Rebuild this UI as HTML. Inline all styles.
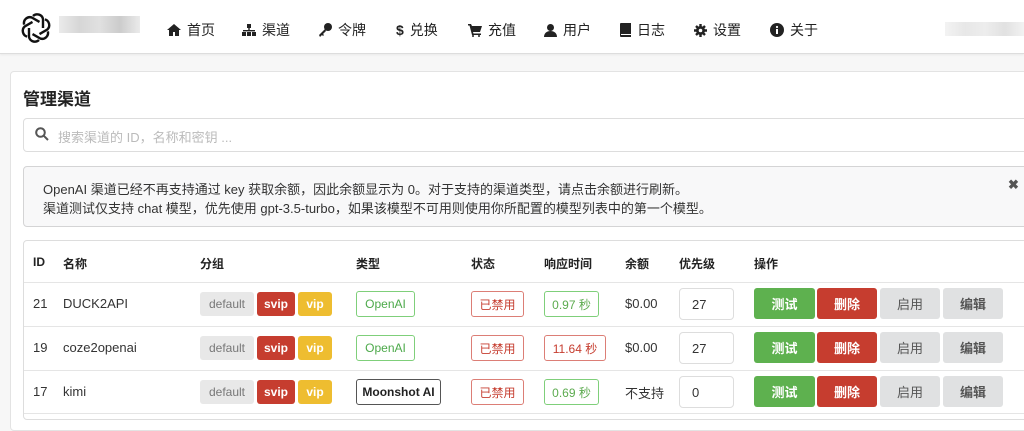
<!DOCTYPE html>
<html><head><meta charset="utf-8"><style>
*{box-sizing:border-box;margin:0;padding:0}
body{width:1024px;height:415px;overflow:hidden;background:#f7f7f7;font-family:"Liberation Sans","Noto Sans CJK SC",sans-serif;color:#333;font-size:13px;position:relative}
.hdr{position:absolute;left:0;top:0;width:1024px;height:54px;background:#fff;border-bottom:1px solid #ddd;box-shadow:0 1px 2px rgba(0,0,0,.06)}
.nav{position:absolute;top:20px;font-size:14px;color:#222;display:flex;align-items:center;gap:6px;white-space:nowrap}
.nav svg{fill:#222}
.blur{position:absolute;background:linear-gradient(90deg,#ddd,#bbb,#ccc,#aaa,#ddd);opacity:.6}
.card{position:absolute;left:10px;top:71px;width:1030px;height:360px;background:#fff;border:1px solid #e3e3e3;border-radius:4px}
.abs{position:absolute;white-space:nowrap}
.bd{position:absolute;font-size:12px;border-radius:3px;display:flex;align-items:center;justify-content:center}
.btn{position:absolute;height:31px;border-radius:3px;display:flex;align-items:center;justify-content:center;font-size:13px;font-weight:bold}
</style></head><body>
<div class="hdr">
<svg class="abs" style="left:20px;top:12px" width="32" height="32" viewBox="0 0 32 32" fill="none" stroke="#111" stroke-width="2.4"><g transform="translate(16 16)"><path d="M-3-12a6 6 0 0 1 10 3v9"/><path d="M-3-12a6 6 0 0 1 10 3v9" transform="rotate(60)"/><path d="M-3-12a6 6 0 0 1 10 3v9" transform="rotate(120)"/><path d="M-3-12a6 6 0 0 1 10 3v9" transform="rotate(180)"/><path d="M-3-12a6 6 0 0 1 10 3v9" transform="rotate(240)"/><path d="M-3-12a6 6 0 0 1 10 3v9" transform="rotate(300)"/></g></svg>
<div class="blur" style="left:59px;top:16px;width:81px;height:17px"></div>
<div class="nav" style="left:167px"><svg width="14" height="12" viewBox="0 0 14 12"><path d="M7 0L0 6h2v6h4V8h2v4h4V6h2z"/></svg>首页</div>
<div class="nav" style="left:242px"><svg width="14" height="12" viewBox="0 0 14 12"><rect x="5" y="0" width="4" height="4"/><rect x="6.3" y="4" width="1.4" height="3"/><rect x="1" y="6" width="12" height="1.4"/><rect x="0" y="8" width="4" height="4"/><rect x="5" y="8" width="4" height="4"/><rect x="10" y="8" width="4" height="4"/></svg>渠道</div>
<div class="nav" style="left:318px"><svg width="14" height="14" viewBox="0 0 14 14"><circle cx="10" cy="4" r="4"/><path d="M7 6L1 12l1 2 2-2 1 1 1-1-1-1 3-3z"/></svg>令牌</div>
<div class="nav" style="left:396px"><b>$</b>兑换</div>
<div class="nav" style="left:468px"><svg width="14" height="13" viewBox="0 0 14 13"><path d="M0 0h3l1 2h10l-2 6H5l.5 1.5H13V11H4L1.5 1.5H0z"/><circle cx="5" cy="12" r="1"/><circle cx="11" cy="12" r="1"/></svg>充值</div>
<div class="nav" style="left:544px"><svg width="13" height="13" viewBox="0 0 13 13"><circle cx="6.5" cy="3.5" r="3.5"/><path d="M0 13c0-4 3-6 6.5-6S13 9 13 13z"/></svg>用户</div>
<div class="nav" style="left:620px"><svg width="11" height="14" viewBox="0 0 11 14"><path d="M0 1a1 1 0 0 1 1-1h10v11H1v1h10v2H1a1 1 0 0 1-1-1z"/></svg>日志</div>
<div class="nav" style="left:694px"><svg width="13" height="13" viewBox="0 0 13 13"><circle cx="6.5" cy="6.5" r="4.5"/><g stroke="#222" stroke-width="2.4"><path d="M6.5 0v13M0 6.5h13M2 2l9 9M11 2l-9 9"/></g><circle cx="6.5" cy="6.5" r="1.8" fill="#fff"/></svg>设置</div>
<div class="nav" style="left:770px"><svg width="14" height="14" viewBox="0 0 14 14"><circle cx="7" cy="7" r="7"/><rect x="6" y="6" width="2" height="5" fill="#fff"/><circle cx="7" cy="4" r="1.1" fill="#fff"/></svg>关于</div>
<div class="blur" style="left:945px;top:22px;width:80px;height:14px;opacity:.35"></div>
</div>
<div class="card"></div>
<div class="abs" style="left:23px;top:85px;font-size:17px;font-weight:bold;color:#222">管理渠道</div>
<div class="abs" style="left:23px;top:118px;width:1010px;height:34px;border:1px solid #ddd;border-radius:4px;background:#fff"></div>
<svg class="abs" style="left:35px;top:127px" width="14" height="14" viewBox="0 0 14 14" fill="none" stroke="#555" stroke-width="2"><circle cx="5.5" cy="5.5" r="4.3"/><path d="M8.7 8.7L13 13"/></svg>
<div class="abs" style="left:58px;top:127px;font-size:13px;color:#bbb">搜索渠道的 ID，名称和密钥 ...</div>
<div class="abs" style="left:23px;top:166px;width:1010px;height:61px;border:1px solid #d4d4d5;border-radius:4px;background:#f8f8f9"></div>
<div class="abs" style="left:43px;top:180px;font-size:13px;color:#333;line-height:19px">OpenAI 渠道已经不再支持通过 key 获取余额，因此余额显示为 0。对于支持的渠道类型，请点击余额进行刷新。<br>渠道测试仅支持 chat 模型，优先使用 gpt-3.5-turbo，如果该模型不可用则使用你所配置的模型列表中的第一个模型。</div>
<div class="abs" style="left:1008px;top:177px;font-size:13px;color:#555;font-weight:bold">✖</div>
<div class="abs" style="left:23px;top:240px;width:1010px;height:180px;border:1px solid #ddd;border-radius:4px;background:#fff"></div>
<div class="abs" style="left:24px;top:282px;width:1000px;border-top:1px solid #e5e5e5"></div>
<div class="abs" style="left:24px;top:326px;width:1000px;border-top:1px solid #e5e5e5"></div>
<div class="abs" style="left:24px;top:370px;width:1000px;border-top:1px solid #e5e5e5"></div>
<div class="abs" style="left:24px;top:413px;width:1000px;border-top:1px solid #e5e5e5"></div>
<div class="abs" style="top:255px;left:0;font-size:12px;font-weight:bold;color:#222">
<span class="abs" style="left:33px">ID</span><span class="abs" style="left:63px">名称</span><span class="abs" style="left:200px">分组</span><span class="abs" style="left:356px">类型</span><span class="abs" style="left:471px">状态</span><span class="abs" style="left:544px">响应时间</span><span class="abs" style="left:625px">余额</span><span class="abs" style="left:679px">优先级</span><span class="abs" style="left:754px">操作</span></div>

<div class="abs" style="left:33px;top:296px">21</div><div class="abs" style="left:63px;top:296px">DUCK2API</div>
<div class="abs" style="left:33px;top:340px">19</div><div class="abs" style="left:63px;top:340px">coze2openai</div>
<div class="abs" style="left:33px;top:384px">17</div><div class="abs" style="left:63px;top:384px">kimi</div>

<div class="bd" style="left:200px;top:292px;width:54px;height:24px;background:#e8e8e8;color:#777">default</div>
<div class="bd" style="left:257px;top:292px;width:38px;height:24px;background:#c63d2f;color:#fff;font-weight:bold">svip</div>
<div class="bd" style="left:298px;top:292px;width:34px;height:24px;background:#eebd30;color:#fff;font-weight:bold">vip</div>
<div class="bd" style="left:200px;top:336px;width:54px;height:24px;background:#e8e8e8;color:#777">default</div>
<div class="bd" style="left:257px;top:336px;width:38px;height:24px;background:#c63d2f;color:#fff;font-weight:bold">svip</div>
<div class="bd" style="left:298px;top:336px;width:34px;height:24px;background:#eebd30;color:#fff;font-weight:bold">vip</div>
<div class="bd" style="left:200px;top:380px;width:54px;height:24px;background:#e8e8e8;color:#777">default</div>
<div class="bd" style="left:257px;top:380px;width:38px;height:24px;background:#c63d2f;color:#fff;font-weight:bold">svip</div>
<div class="bd" style="left:298px;top:380px;width:34px;height:24px;background:#eebd30;color:#fff;font-weight:bold">vip</div>

<div class="bd" style="left:356px;top:291px;width:59px;height:26px;border:1px solid #7fcf7a;color:#4ca94a">OpenAI</div>
<div class="bd" style="left:356px;top:335px;width:59px;height:26px;border:1px solid #7fcf7a;color:#4ca94a">OpenAI</div>
<div class="bd" style="left:356px;top:379px;width:85px;height:26px;border:1px solid #555;color:#222;font-weight:bold">Moonshot AI</div>

<div class="bd" style="left:471px;top:291px;width:53px;height:26px;border:1px solid #dc7e76;color:#c63d2f">已禁用</div>
<div class="bd" style="left:471px;top:335px;width:53px;height:26px;border:1px solid #dc7e76;color:#c63d2f">已禁用</div>
<div class="bd" style="left:471px;top:379px;width:53px;height:26px;border:1px solid #dc7e76;color:#c63d2f">已禁用</div>

<div class="bd" style="left:544px;top:291px;width:55px;height:26px;border:1px solid #7fcf7a;color:#5cab4f">0.97 秒</div>
<div class="bd" style="left:544px;top:335px;width:62px;height:26px;border:1px solid #dc7e76;color:#c63d2f">11.64 秒</div>
<div class="bd" style="left:544px;top:379px;width:55px;height:26px;border:1px solid #7fcf7a;color:#5cab4f">0.69 秒</div>

<div class="abs" style="left:625px;top:296px">$0.00</div>
<div class="abs" style="left:625px;top:340px">$0.00</div>
<div class="abs" style="left:625px;top:383px">不支持</div>

<div class="abs" style="left:679px;top:288px;width:55px;height:32px;border:1px solid #ddd;border-radius:4px;padding:8px 0 0 12px">27</div>
<div class="abs" style="left:679px;top:332px;width:55px;height:32px;border:1px solid #ddd;border-radius:4px;padding:8px 0 0 12px">27</div>
<div class="abs" style="left:679px;top:376px;width:55px;height:32px;border:1px solid #ddd;border-radius:4px;padding:8px 0 0 12px">0</div>

<div class="btn" style="left:754px;top:288px;width:61px;background:#5eb14f;color:#fff">测试</div>
<div class="btn" style="left:817px;top:288px;width:60px;background:#c63d2f;color:#fff">删除</div>
<div class="btn" style="left:880px;top:288px;width:60px;background:#e0e1e2;color:#555;font-weight:normal">启用</div>
<div class="btn" style="left:943px;top:288px;width:60px;background:#e0e1e2;color:#555">编辑</div>
<div class="btn" style="left:754px;top:332px;width:61px;background:#5eb14f;color:#fff">测试</div>
<div class="btn" style="left:817px;top:332px;width:60px;background:#c63d2f;color:#fff">删除</div>
<div class="btn" style="left:880px;top:332px;width:60px;background:#e0e1e2;color:#555;font-weight:normal">启用</div>
<div class="btn" style="left:943px;top:332px;width:60px;background:#e0e1e2;color:#555">编辑</div>
<div class="btn" style="left:754px;top:376px;width:61px;background:#5eb14f;color:#fff">测试</div>
<div class="btn" style="left:817px;top:376px;width:60px;background:#c63d2f;color:#fff">删除</div>
<div class="btn" style="left:880px;top:376px;width:60px;background:#e0e1e2;color:#555;font-weight:normal">启用</div>
<div class="btn" style="left:943px;top:376px;width:60px;background:#e0e1e2;color:#555">编辑</div>
</body></html>
